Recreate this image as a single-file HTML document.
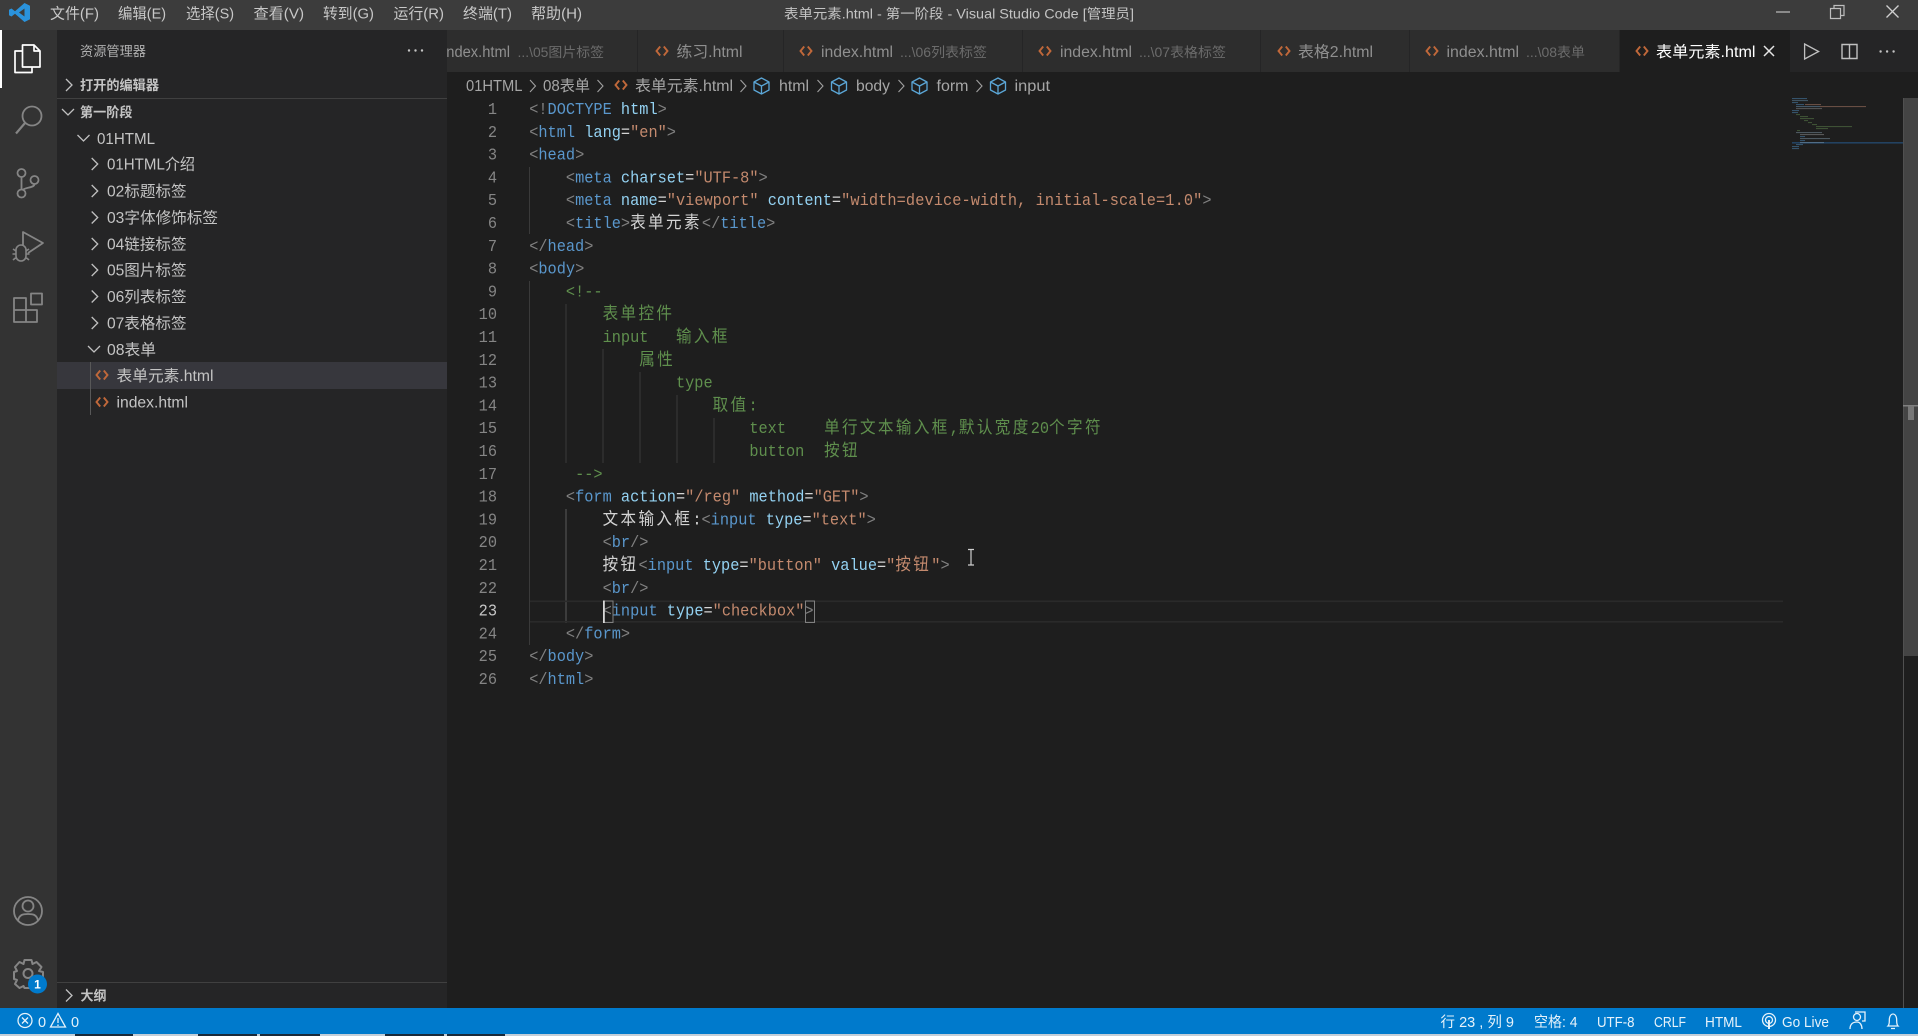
<!DOCTYPE html>
<html lang="zh">
<head>
<meta charset="utf-8">
<title>表单元素.html - 第一阶段 - Visual Studio Code</title>
<style>
html,body{margin:0;padding:0;background:#1e1e1e;width:1918px;height:1036px;overflow:hidden}
svg{display:block}
text{font-family:"Liberation Sans","Noto Sans CJK SC",sans-serif;white-space:pre}
.m text,.m{font-size:15px;fill:#c8c8c8}
.s{font-size:15.5px;fill:#c4c4c4}
.b{font-size:13.5px;font-weight:bold;fill:#c4c4c4}
.tb{font-size:15.5px;fill:#8f8f8f}
.ts{font-size:13.5px;fill:#6c6c6c}
.bc{font-size:15.5px;fill:#a6a6a6}
.st{font-size:14.5px;fill:#e6f2fa}
.code text{font-family:"Liberation Mono","Noto Sans CJK SC",monospace;font-size:16.7px;fill:#d4d4d4}
.n text{font-family:"Liberation Mono",monospace;font-size:16.7px;fill:#858585;text-anchor:end}
.p{fill:#808080}.t{fill:#5a97cc}.a{fill:#94d2f2}.q{fill:#c48a6e}.g{fill:#5f8f4d}
.code .g{fill:#5f8f4d}
.code .t{fill:#5a97cc}.code .a{fill:#94d2f2}.code .q{fill:#c48a6e}.code .p{fill:#808080}
.c{font-family:"Noto Sans CJK SC",sans-serif;font-size:17px;letter-spacing:2.6px}
</style>
</head>
<body>
<svg xmlns="http://www.w3.org/2000/svg" width="1918" height="1036" viewBox="0 0 1918 1036">
<defs>
<path id="fi" d="M-1.8,-4.5 L-5.5,0 L-1.8,4.5 M1.8,-4.5 L5.5,0 L1.8,4.5" fill="none" stroke="#c0683a" stroke-width="1.9"/>
<path id="cr" d="M-3,-6 L3,0 L-3,6" fill="none" stroke="#c0c0c0" stroke-width="1.3"/>
<path id="cd" d="M-6,-3 L0,3 L6,-3" fill="none" stroke="#c0c0c0" stroke-width="1.3"/>
<path id="bcr" d="M-2.5,-6 L3,0 L-2.5,6" fill="none" stroke="#a0a0a0" stroke-width="1.1"/>
<path id="cb" d="M0,-8 L7.5,-4 V4 L0,8 L-7.5,4 V-4 Z M-7.5,-4 L0,0 L7.5,-4 M0,0 V8" fill="none" stroke="#5ba6d6" stroke-width="1.3" stroke-linejoin="round"/>
</defs>

<!-- backgrounds -->
<rect width="1918" height="1036" fill="#1e1e1e"/>
<rect width="1918" height="30" fill="#3c3c3c"/>
<rect y="30" width="57" height="978" fill="#333333"/>
<rect x="57" y="30" width="390" height="978" fill="#252526"/>
<rect x="447" y="30" width="1471" height="42" fill="#252526"/>

<!-- title bar -->
<path d="M24.5,3 L30,5.7 V19.3 L24.5,22 L15,13.7 L11.5,16.5 L9,15.2 V9.8 L11.5,8.5 L15,11.3 Z M24.5,8.5 L19,12.5 L24.5,16.5 Z" fill="#2a93dd" fill-rule="evenodd"/>
<g class="m">
<text x="50" y="18.5" textLength="49" lengthAdjust="spacingAndGlyphs">文件(F)</text>
<text x="118" y="18.5" textLength="48" lengthAdjust="spacingAndGlyphs">编辑(E)</text>
<text x="186" y="18.5" textLength="48" lengthAdjust="spacingAndGlyphs">选择(S)</text>
<text x="253.5" y="18.5" textLength="50.5" lengthAdjust="spacingAndGlyphs">查看(V)</text>
<text x="323" y="18.5" textLength="51" lengthAdjust="spacingAndGlyphs">转到(G)</text>
<text x="393.5" y="18.5" textLength="50.5" lengthAdjust="spacingAndGlyphs">运行(R)</text>
<text x="463" y="18.5" textLength="49" lengthAdjust="spacingAndGlyphs">终端(T)</text>
<text x="531" y="18.5" textLength="51" lengthAdjust="spacingAndGlyphs">帮助(H)</text>
</g>
<text x="784" y="18.5" style="font-size:13.5px;fill:#c4c4c4" textLength="350" lengthAdjust="spacingAndGlyphs">表单元素.html - 第一阶段 - Visual Studio Code [管理员]</text>
<path d="M1776,12 H1790" stroke="#bdbdbd" stroke-width="1.2"/>
<path d="M1830.5,8.5 H1840.5 V18.5 H1830.5 Z M1834,8.5 V5.5 H1844 V15.5 H1840.5" fill="none" stroke="#bdbdbd" stroke-width="1.2"/>
<path d="M1886.5,5.5 L1898.5,17.5 M1898.5,5.5 L1886.5,17.5" stroke="#d0d0d0" stroke-width="1.3"/>

<!-- activity bar -->
<rect x="0" y="30" width="2" height="58" fill="#ffffff"/>
<g fill="none" stroke="#ffffff" stroke-width="1.7" stroke-linejoin="round">
<path d="M22.5,45 H34 L40,51 V67 H22.5 Z M34,45 V51 H40"/>
<path d="M22.5,51 H15 V72.5 H32 V67"/>
</g>
<g fill="none" stroke="#858585" stroke-width="1.8" stroke-linejoin="round">
<circle cx="32" cy="116" r="9.5"/>
<path d="M25,123 L16,133.5" stroke-width="2.2"/>
<circle cx="21.5" cy="173" r="4"/><circle cx="21.5" cy="193.5" r="4"/><circle cx="34.5" cy="180" r="4"/>
<path d="M21.5,177 V189.5 M34.5,184 C34.5,188 26,187 22.5,190"/>
<path d="M23,246 V232 L43,243 L28,253"/>
<path d="M16,250 A5,5 0 0 1 26,250 V256 A5,5 0 0 1 16,256 Z M13,249 L16,251 M29,249 L26,251 M12.5,254 H16 M29.5,254 H26 M13,260 L16,257.5 M29,260 L26,257.5" stroke-width="1.6"/>
<path d="M14,298 H26 V322 H14 Z M14,310 H37 V322 H26" />
<rect x="31" y="293.5" width="11" height="11"/>
<circle cx="28" cy="911" r="14"/>
<circle cx="28" cy="906" r="5.5"/>
<path d="M18,921 C19,914 24,914 28,914 C32,914 37,914 38,921"/>
<circle cx="28" cy="973.5" r="4.5" stroke-width="2"/>
<path d="M24.5,960 H31.5 L32.5,964 L36.5,962 L41.5,967 L39,971 L43,972 V979 L39,980 L41,984 L36.5,988 L32.5,986 L31.5,988 H24.5 L23.5,986 L19.5,988 L15,984 L17,980 L14,979 V972 L17,971 L15,967 L19.5,962 L23.5,964 Z" stroke-width="2"/>
</g>
<circle cx="37.5" cy="984" r="9.5" fill="#007acc"/>
<text x="37.5" y="988.5" text-anchor="middle" style="font-size:12px;font-weight:bold;fill:#fff">1</text>

<!-- sidebar -->
<text x="80" y="56" style="font-size:13.5px;fill:#b0b0b0" textLength="66" lengthAdjust="spacingAndGlyphs">资源管理器</text>
<g fill="#c5c5c5"><circle cx="409" cy="50.5" r="1.2"/><circle cx="415.5" cy="50.5" r="1.2"/><circle cx="422" cy="50.5" r="1.2"/></g>
<use href="#cr" x="69" y="85"/>
<text x="80" y="90" class="b" textLength="79" lengthAdjust="spacingAndGlyphs">打开的编辑器</text>
<rect x="57" y="98" width="390" height="1" fill="#404040"/>
<use href="#cd" x="68" y="112"/>
<text x="80" y="117" class="b" textLength="52.5" lengthAdjust="spacingAndGlyphs">第一阶段</text>
<use href="#cd" x="83.5" y="138"/>
<text x="97" y="144" class="s" textLength="58" lengthAdjust="spacingAndGlyphs">01HTML</text>
<use href="#cr" x="94.7" y="164"/>
<text x="107" y="169.5" class="s" textLength="88" lengthAdjust="spacingAndGlyphs">01HTML介绍</text>
<use href="#cr" x="94.7" y="191"/>
<text x="107" y="196.5" class="s" textLength="79.5" lengthAdjust="spacingAndGlyphs">02标题标签</text>
<use href="#cr" x="94.7" y="217.5"/>
<text x="107" y="223" class="s" textLength="111" lengthAdjust="spacingAndGlyphs">03字体修饰标签</text>
<use href="#cr" x="94.7" y="244"/>
<text x="107" y="249.5" class="s" textLength="79.5" lengthAdjust="spacingAndGlyphs">04链接标签</text>
<use href="#cr" x="94.7" y="270"/>
<text x="107" y="275.5" class="s" textLength="79.5" lengthAdjust="spacingAndGlyphs">05图片标签</text>
<use href="#cr" x="94.7" y="296.5"/>
<text x="107" y="302" class="s" textLength="79.5" lengthAdjust="spacingAndGlyphs">06列表标签</text>
<use href="#cr" x="94.7" y="323"/>
<text x="107" y="328.5" class="s" textLength="79.5" lengthAdjust="spacingAndGlyphs">07表格标签</text>
<use href="#cd" x="94" y="349"/>
<text x="107" y="355" class="s" textLength="49" lengthAdjust="spacingAndGlyphs">08表单</text>
<rect x="57" y="362" width="390" height="27" fill="#37373d"/>
<rect x="90" y="362" width="1" height="53" fill="#585858"/>
<use href="#fi" x="102" y="375"/>
<text x="116.5" y="381" class="s" textLength="97" lengthAdjust="spacingAndGlyphs">表单元素.html</text>
<use href="#fi" x="102" y="402"/>
<text x="116.5" y="407.5" class="s" textLength="71.5" lengthAdjust="spacingAndGlyphs">index.html</text>
<rect x="57" y="982" width="390" height="1" fill="#404040"/>
<use href="#cr" x="69" y="995.5"/>
<text x="80.5" y="1000.5" class="b" textLength="26" lengthAdjust="spacingAndGlyphs">大纲</text>

<!-- tabs -->
<g fill="#2d2d2d">
<rect x="447" y="30" width="190" height="42"/>
<rect x="638" y="30" width="145" height="42"/>
<rect x="784" y="30" width="238" height="42"/>
<rect x="1023" y="30" width="237" height="42"/>
<rect x="1261" y="30" width="148" height="42"/>
<rect x="1410" y="30" width="209.5" height="42"/>
</g>
<rect x="1619.5" y="30" width="170.5" height="42" fill="#1e1e1e"/>
<svg x="447" y="30" width="190" height="42" viewBox="0 0 190 42"><text x="-4" y="27" class="tb" textLength="67" lengthAdjust="spacingAndGlyphs">index.html</text></svg>
<text x="517.5" y="57" class="ts" textLength="86.5" lengthAdjust="spacingAndGlyphs">...\05图片标签</text>
<use href="#fi" x="662" y="51"/>
<text x="676.5" y="57" class="tb" textLength="66" lengthAdjust="spacingAndGlyphs">练习.html</text>
<use href="#fi" x="806" y="51"/>
<text x="821" y="57" class="tb" textLength="72" lengthAdjust="spacingAndGlyphs">index.html</text>
<text x="900" y="57" class="ts" textLength="87" lengthAdjust="spacingAndGlyphs">...\06列表标签</text>
<use href="#fi" x="1045" y="51"/>
<text x="1060" y="57" class="tb" textLength="72" lengthAdjust="spacingAndGlyphs">index.html</text>
<text x="1139" y="57" class="ts" textLength="87" lengthAdjust="spacingAndGlyphs">...\07表格标签</text>
<use href="#fi" x="1284" y="51"/>
<text x="1298" y="57" class="tb" textLength="75" lengthAdjust="spacingAndGlyphs">表格2.html</text>
<use href="#fi" x="1432" y="51"/>
<text x="1446.5" y="57" class="tb" textLength="72.5" lengthAdjust="spacingAndGlyphs">index.html</text>
<text x="1526" y="57" class="ts" textLength="59" lengthAdjust="spacingAndGlyphs">...\08表单</text>
<use href="#fi" x="1642" y="51"/>
<text x="1656" y="57" class="tb" style="fill:#fff" textLength="99.5" lengthAdjust="spacingAndGlyphs">表单元素.html</text>
<path d="M1764,46 L1774,56 M1774,46 L1764,56" stroke="#e6e6e6" stroke-width="1.5"/>
<path d="M1804.6,44 L1818.6,51.5 L1804.6,59 Z" fill="none" stroke="#c0c0c0" stroke-width="1.3"/>
<path d="M1842,44.5 H1857 V58.5 H1842 Z M1849.5,44.5 V58.5" fill="none" stroke="#c0c0c0" stroke-width="1.4"/>
<g fill="#c5c5c5"><circle cx="1880.6" cy="51.5" r="1.2"/><circle cx="1887.1" cy="51.5" r="1.2"/><circle cx="1893.6" cy="51.5" r="1.2"/></g>

<!-- breadcrumb -->
<text x="466" y="91" class="bc" textLength="56.5" lengthAdjust="spacingAndGlyphs">01HTML</text>
<use href="#bcr" x="532.5" y="86"/>
<text x="543" y="91" class="bc" textLength="47" lengthAdjust="spacingAndGlyphs">08表单</text>
<use href="#bcr" x="600" y="86"/>
<use href="#fi" x="621" y="85"/>
<text x="635" y="91" class="bc" textLength="98" lengthAdjust="spacingAndGlyphs">表单元素.html</text>
<use href="#bcr" x="743" y="86"/>
<use href="#cb" x="761.5" y="86"/>
<text x="779" y="91" class="bc" textLength="30" lengthAdjust="spacingAndGlyphs">html</text>
<use href="#bcr" x="820" y="86"/>
<use href="#cb" x="839" y="86"/>
<text x="856" y="91" class="bc" textLength="34" lengthAdjust="spacingAndGlyphs">body</text>
<use href="#bcr" x="901" y="86"/>
<use href="#cb" x="919.5" y="86"/>
<text x="936.5" y="91" class="bc" textLength="32" lengthAdjust="spacingAndGlyphs">form</text>
<use href="#bcr" x="979" y="86"/>
<use href="#cb" x="998" y="86"/>
<text x="1014.5" y="91" class="bc" textLength="35.5" lengthAdjust="spacingAndGlyphs">input</text>

<!-- indent guides -->
<g fill="#3a3a3a">
<rect x="529" y="167" width="1" height="67"/>
<rect x="529" y="281" width="1" height="364"/>
<rect x="565.5" y="304" width="1" height="159"/>
<rect x="565.5" y="509" width="1" height="114" fill="#5a5a5a"/>
<rect x="602.5" y="349" width="1" height="114"/>
<rect x="639.5" y="372" width="1" height="91"/>
<rect x="676.5" y="395" width="1" height="68"/>
<rect x="713.5" y="418" width="1" height="45"/>
</g>

<!-- current line -->
<rect x="530" y="600.5" width="1253" height="1.6" fill="#2a2a2a"/>
<rect x="530" y="621" width="1253" height="1.6" fill="#2a2a2a"/>

<!-- line numbers -->
<g class="n" transform="translate(497,0) scale(.916,1)">
<text y="114">1</text><text y="136.8">2</text><text y="159.6">3</text><text y="182.4">4</text><text y="205.2">5</text><text y="228">6</text><text y="250.8">7</text><text y="273.6">8</text><text y="296.4">9</text><text y="319.2">10</text><text y="342">11</text><text y="364.8">12</text><text y="387.6">13</text><text y="410.4">14</text><text y="433.2">15</text><text y="456">16</text><text y="478.8">17</text><text y="501.6">18</text><text y="524.4">19</text><text y="547.2">20</text><text y="570">21</text><text y="592.8">22</text><text y="615.6" style="fill:#c6c6c6">23</text><text y="638.4">24</text><text y="661.2">25</text><text y="684">26</text>
</g>

<!-- code -->
<g class="code" transform="translate(529.2,0) scale(.916,1)">
<text y="114"><tspan class="p">&lt;!</tspan><tspan class="t">DOCTYPE</tspan> <tspan class="a">html</tspan><tspan class="p">&gt;</tspan></text>
<text y="136.8"><tspan class="p">&lt;</tspan><tspan class="t">html</tspan> <tspan class="a">lang</tspan>=<tspan class="q">"en"</tspan><tspan class="p">&gt;</tspan></text>
<text y="159.6"><tspan class="p">&lt;</tspan><tspan class="t">head</tspan><tspan class="p">&gt;</tspan></text>
<text y="182.4">    <tspan class="p">&lt;</tspan><tspan class="t">meta</tspan> <tspan class="a">charset</tspan>=<tspan class="q">"UTF-8"</tspan><tspan class="p">&gt;</tspan></text>
<text y="205.2">    <tspan class="p">&lt;</tspan><tspan class="t">meta</tspan> <tspan class="a">name</tspan>=<tspan class="q">"viewport"</tspan> <tspan class="a">content</tspan>=<tspan class="q" style="letter-spacing:.1px">"width=device-width, initial-scale=1.0"</tspan><tspan class="p">&gt;</tspan></text>
<text y="228">    <tspan class="p">&lt;</tspan><tspan class="t">title</tspan><tspan class="p">&gt;</tspan><tspan class="c">表单元素</tspan><tspan class="p">&lt;/</tspan><tspan class="t">title</tspan><tspan class="p">&gt;</tspan></text>
<text y="250.8"><tspan class="p">&lt;/</tspan><tspan class="t">head</tspan><tspan class="p">&gt;</tspan></text>
<text y="273.6"><tspan class="p">&lt;</tspan><tspan class="t">body</tspan><tspan class="p">&gt;</tspan></text>
<text y="296.4" class="g">    <tspan class="g">&lt;!--</tspan></text>
<text y="319.2" class="g">        <tspan class="c g">表单控件</tspan></text>
<text y="342" class="g">        <tspan class="g">input   </tspan><tspan class="c g">输入框</tspan></text>
<text y="364.8" class="g">            <tspan class="c g">属性</tspan></text>
<text y="387.6" class="g">                <tspan class="g">type</tspan></text>
<text y="410.4" class="g">                    <tspan class="c g">取值</tspan><tspan class="g">:</tspan></text>
<text y="433.2" class="g">                        <tspan class="g">text    </tspan><tspan class="c g" dx="1.5">单行文本输入框</tspan><tspan class="g">,</tspan><tspan class="c g">默认宽度</tspan><tspan class="g">20</tspan><tspan class="c g">个字符</tspan></text>
<text y="456" class="g">                        <tspan class="g">button  </tspan><tspan class="c g" dx="1.5">按钮</tspan></text>
<text y="478.8" class="g">     <tspan class="g">--&gt;</tspan></text>
<text y="501.6">    <tspan class="p">&lt;</tspan><tspan class="t">form</tspan> <tspan class="a">action</tspan>=<tspan class="q">"/reg"</tspan> <tspan class="a">method</tspan>=<tspan class="q">"GET"</tspan><tspan class="p">&gt;</tspan></text>
<text y="524.4">        <tspan class="c">文本输入框</tspan>:<tspan class="p">&lt;</tspan><tspan class="t">input</tspan> <tspan class="a">type</tspan>=<tspan class="q">"text"</tspan><tspan class="p">&gt;</tspan></text>
<text y="547.2">        <tspan class="p">&lt;</tspan><tspan class="t">br</tspan><tspan class="p">/&gt;</tspan></text>
<text y="570">        <tspan class="c">按钮</tspan><tspan class="p">&lt;</tspan><tspan class="t">input</tspan> <tspan class="a">type</tspan>=<tspan class="q">"button"</tspan> <tspan class="a">value</tspan>=<tspan class="q">"</tspan><tspan class="c q">按钮</tspan><tspan class="q">"</tspan><tspan class="p">&gt;</tspan></text>
<text y="592.8">        <tspan class="p">&lt;</tspan><tspan class="t">br</tspan><tspan class="p">/&gt;</tspan></text>
<text y="615.6">        <tspan class="p">&lt;</tspan><tspan class="t">input</tspan> <tspan class="a">type</tspan>=<tspan class="q">"checkbox"</tspan><tspan class="p">&gt;</tspan></text>
<text y="638.4">    <tspan class="p">&lt;/</tspan><tspan class="t">form</tspan><tspan class="p">&gt;</tspan></text>
<text y="661.2"><tspan class="p">&lt;/</tspan><tspan class="t">body</tspan><tspan class="p">&gt;</tspan></text>
<text y="684"><tspan class="p">&lt;/</tspan><tspan class="t">html</tspan><tspan class="p">&gt;</tspan></text>
</g>

<!-- bracket match & cursor -->
<rect x="604" y="601" width="9" height="21.5" fill="none" stroke="#808080" stroke-width="1"/>
<rect x="805.5" y="601" width="9" height="21.5" fill="none" stroke="#808080" stroke-width="1"/>
<rect x="603" y="600.5" width="1.8" height="22.5" fill="#d8d8d8"/>

<!-- mouse I-beam -->
<path d="M968,549.5 H974 M971,549.5 V565 M968,565 H974" stroke="#cfcfcf" stroke-width="1.2" fill="none"/>

<!-- minimap -->
<g opacity=".42">
<rect x="1792" y="98" width="15" height="1.1" fill="#569cd6"/>
<rect x="1792" y="100" width="16" height="1.1" fill="#6f9fc0"/>
<rect x="1792" y="102" width="6" height="1.1" fill="#569cd6"/>
<rect x="1796" y="104" width="8" height="1.1" fill="#569cd6"/><rect x="1805" y="104" width="16" height="1.1" fill="#ce9178"/>
<rect x="1796" y="106" width="24" height="1.1" fill="#7aa8cc"/><rect x="1820" y="106" width="46" height="1.1" fill="#ce9178"/>
<rect x="1796" y="108" width="26" height="1.1" fill="#9a9a9a"/>
<rect x="1792" y="110" width="7" height="1.1" fill="#569cd6"/>
<rect x="1792" y="112" width="6" height="1.1" fill="#569cd6"/>
<rect x="1796" y="114" width="4" height="1.1" fill="#6a9955"/>
<rect x="1800" y="116" width="8" height="1.1" fill="#6a9955"/>
<rect x="1800" y="118" width="14" height="1.1" fill="#6a9955"/>
<rect x="1804" y="120" width="4" height="1.1" fill="#6a9955"/>
<rect x="1808" y="122" width="4" height="1.1" fill="#6a9955"/>
<rect x="1812" y="124" width="5" height="1.1" fill="#6a9955"/>
<rect x="1816" y="126" width="36" height="1.1" fill="#6a9955"/>
<rect x="1816" y="128" width="12" height="1.1" fill="#6a9955"/>
<rect x="1797" y="130" width="3" height="1.1" fill="#6a9955"/>
<rect x="1796" y="132" width="26" height="1.1" fill="#8ea8bc"/>
<rect x="1800" y="134" width="24" height="1.1" fill="#a8a8a8"/>
<rect x="1800" y="136" width="5" height="1.1" fill="#569cd6"/>
<rect x="1800" y="138" width="30" height="1.1" fill="#8ea8bc"/>
<rect x="1800" y="140" width="5" height="1.1" fill="#569cd6"/>
</g>
<rect x="1792" y="142" width="111" height="1.6" fill="#264f78" opacity=".75"/>
<g opacity=".42">
<rect x="1800" y="142" width="24" height="1.1" fill="#8ea8bc"/>
<rect x="1796" y="144" width="7" height="1.1" fill="#569cd6"/>
<rect x="1792" y="146" width="7" height="1.1" fill="#569cd6"/>
<rect x="1792" y="148" width="7" height="1.1" fill="#569cd6"/>
</g>

<!-- scrollbar -->
<rect x="1903" y="98" width="15" height="558" fill="#444444"/>
<rect x="1903" y="98" width="1" height="910" fill="#505050"/>
<rect x="1903" y="405" width="15" height="1.5" fill="#808080"/>
<rect x="1908" y="406" width="6" height="14" fill="#787878"/>

<!-- status bar -->
<rect y="1008" width="1918" height="26" fill="#007acc"/>
<g fill="none" stroke="#e6f2fa" stroke-width="1.3">
<circle cx="25" cy="1020.5" r="7"/>
<path d="M22,1017.5 L28,1023.5 M28,1017.5 L22,1023.5"/>
<path d="M58,1013.5 L65.5,1027 H50.5 Z M58,1018 V1023 M58,1024.5 V1026"/>
</g>
<text x="38" y="1027" class="st">0</text>
<text x="71" y="1027" class="st">0</text>
<text x="1440.5" y="1027" class="st" textLength="73.5" lengthAdjust="spacingAndGlyphs">行 23 , 列 9</text>
<text x="1534" y="1027" class="st" textLength="43.5" lengthAdjust="spacingAndGlyphs">空格: 4</text>
<text x="1597" y="1027" class="st" textLength="37.5" lengthAdjust="spacingAndGlyphs">UTF-8</text>
<text x="1654" y="1027" class="st" textLength="32" lengthAdjust="spacingAndGlyphs">CRLF</text>
<text x="1705" y="1027" class="st" textLength="37" lengthAdjust="spacingAndGlyphs">HTML</text>
<g fill="none" stroke="#e6f2fa" stroke-width="1.3">
<circle cx="1769" cy="1020" r="6.5"/>
<circle cx="1769" cy="1020" r="3.5"/>
<path d="M1769,1020 V1029" stroke-width="2"/>
<circle cx="1857" cy="1017" r="3.5"/>
<path d="M1850,1029 C1850,1024 1853,1022 1857,1022 C1860,1022 1862,1025 1862,1029 M1855,1012 H1865 V1021 H1862"/>
<path d="M1888,1026 H1898 C1896,1024 1897,1020 1896.5,1018 C1896,1015.5 1894.5,1014 1893,1014 C1891.5,1014 1890,1015.5 1889.5,1018 C1889,1020 1890,1024 1888,1026 Z M1891,1028.5 H1895"/>
</g>
<text x="1782" y="1027" class="st" textLength="47" lengthAdjust="spacingAndGlyphs">Go Live</text>

<!-- bottom strip -->
<rect y="1034" width="1918" height="2" fill="#c3ced8"/>
<g fill="#1a2a3a">
<rect x="75" y="1034" width="58" height="2"/>
<rect x="198" y="1034" width="59" height="2"/>
<rect x="260" y="1034" width="60" height="2"/>
<rect x="385" y="1034" width="59" height="2"/>
<rect x="447" y="1034" width="58" height="2"/>
</g>
</svg>
</body>
</html>
